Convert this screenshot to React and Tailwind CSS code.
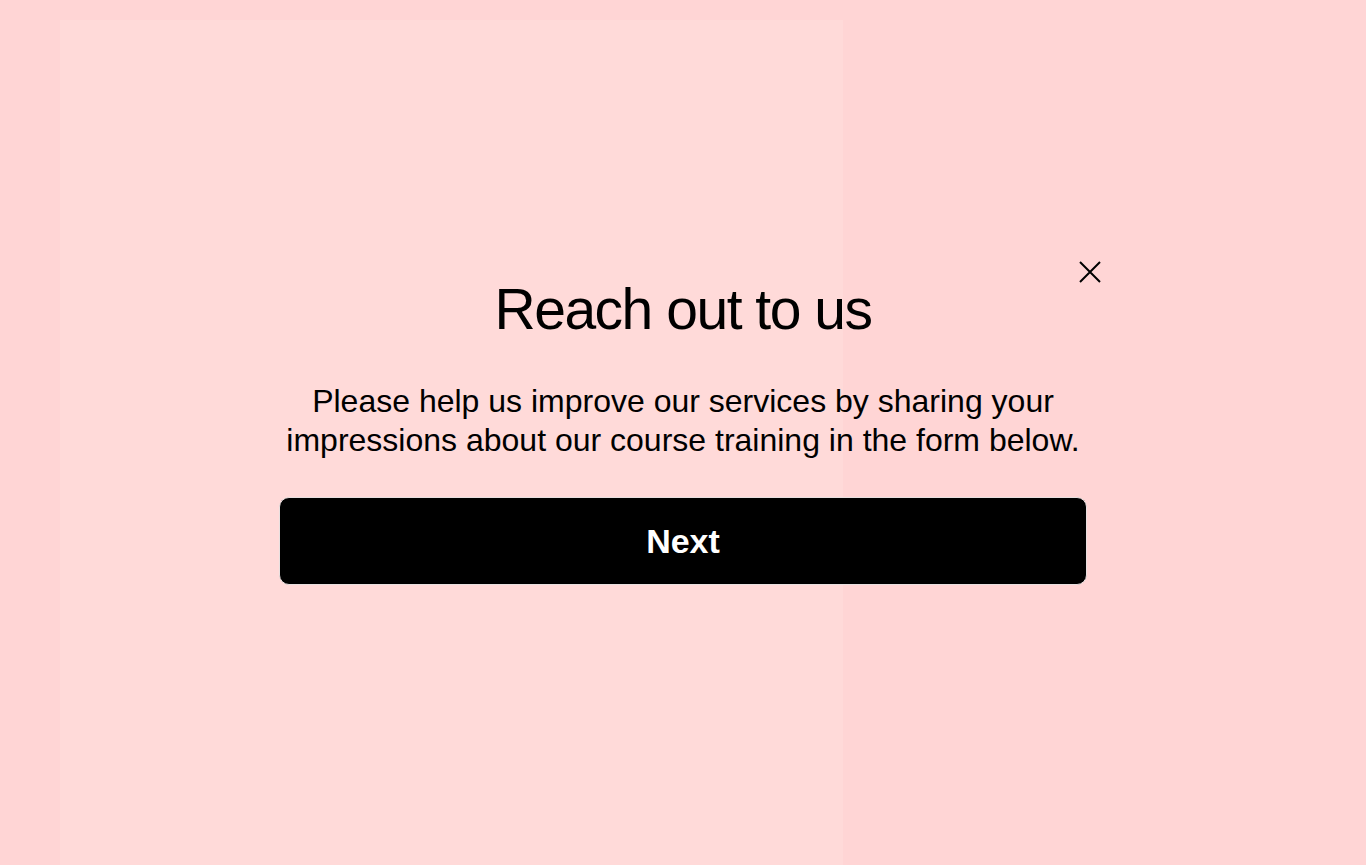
export default function App() {
  return (
    <div className="grid h-[865px] w-full overflow-hidden bg-[#ffd5d5]" style={{ fontFamily: '"Liberation Sans", Arial, sans-serif' }}>
      <div className="col-start-1 row-start-1 pl-[60px] pt-[20px]">
        <div className="h-full w-[783px] bg-[#ffdad9]" />
      </div>

      <div className="col-start-1 row-start-1 flex justify-center pt-[274px]">
        <div className="relative flex w-[808px] flex-col items-center">
          <button className="absolute right-[-15px] top-[-14px] flex h-[24px] w-[24px] items-center justify-center text-black">
            <svg width="24" height="24" viewBox="0 0 24 24" fill="none">
              <path d="M2 2l20 20M22 2L2 22" stroke="currentColor" strokeWidth="2" />
            </svg>
          </button>

          <h1 className="text-[57px] font-normal leading-[70px] tracking-[-0.026em] text-black">Reach out to us</h1>

          <p className="mt-[38px] text-center text-[32px] leading-[39px] text-black">
            Please help us improve our services by sharing your
            <br />
            impressions about our course training in the form below.
          </p>

          <button className="mt-[37px] flex h-[88px] w-full items-center justify-center rounded-[10px] border border-[#e8e0e0] bg-black text-[34px] font-bold text-white">
            Next
          </button>
        </div>
      </div>
    </div>
  )
}
